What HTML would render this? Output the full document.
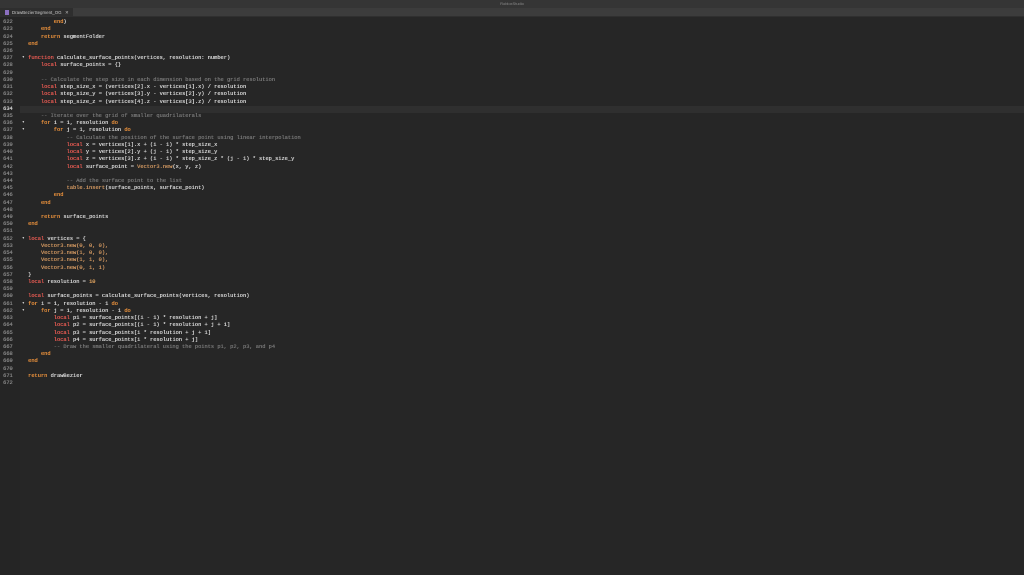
<!DOCTYPE html>
<html><head><meta charset="utf-8"><style>
html,body{margin:0;padding:0;width:1024px;height:575px;overflow:hidden;background:#262626;font-family:"Liberation Mono",monospace}
#title{position:absolute;left:0;top:0;width:1024px;height:8px;background:#353535;color:#8a8a8a;font:4px "Liberation Sans",sans-serif;text-align:center;line-height:8px}
#tabs{position:absolute;left:0;top:8px;width:1024px;height:8px;background:#3c3c3c;border-bottom:1px solid #2f2f2f}
#tab{position:absolute;left:0;top:8px;width:73px;height:9px;background:#2e2e2e;color:#c8c8c8;font:4.4px "Liberation Sans",sans-serif;line-height:9px}
#tab i{position:absolute;left:5px;top:2px;width:4px;height:5px;background:#8b6fc0}
#tab span{position:absolute;left:12px}
#tab b{position:absolute;left:65px;font-weight:normal;color:#bbb}
#gutter{position:absolute;left:0;top:17px;width:20px;height:558px;background:#252525}
#cur{position:absolute;left:20px;top:105.5px;width:1004px;height:7.2px;background:#2f2f2f}
.l{position:absolute;left:0;height:7.22px;line-height:7.22px;font-size:5.35px;white-space:pre;color:#d4d4d4;text-shadow:0.25px 0 0 currentColor}
.n{position:absolute;left:3px;width:14px;color:#8a8a8a}
.f{position:absolute;left:22px;color:#ddd;font-size:4px}
.k{color:#e8903c}.r{color:#e45a52}.m{color:#767676}.v{color:#cf9660}.d{color:#e8a860}
</style></head><body>
<div id="title">RobloxStudio</div>
<div id="tabs"></div>
<div id="tab"><i></i><span>DrawBezierSegment_OG</span><b>✕</b></div>
<div id="gutter"></div>
<div id="cur"></div>
<div id="code"></div>
<script>
var L=[
"        <k>end</k>)",
"    <k>end</k>",
"    <k>return</k> segmentFolder",
"<k>end</k>",
"",
"<r>function</r> calculate_surface_points(vertices, resolution: number)",
"    <r>local</r> surface_points = {}",
"",
"    <m>-- Calculate the step size in each dimension based on the grid resolution</m>",
"    <r>local</r> step_size_x = (vertices[2].x - vertices[1].x) / resolution",
"    <r>local</r> step_size_y = (vertices[3].y - vertices[2].y) / resolution",
"    <r>local</r> step_size_z = (vertices[4].z - vertices[3].z) / resolution",
"",
"    <m>-- Iterate over the grid of smaller quadrilaterals</m>",
"    <k>for</k> i = 1, resolution <k>do</k>",
"        <k>for</k> j = 1, resolution <k>do</k>",
"            <m>-- Calculate the position of the surface point using linear interpolation</m>",
"            <r>local</r> x = vertices[1].x + (i - 1) * step_size_x",
"            <r>local</r> y = vertices[2].y + (j - 1) * step_size_y",
"            <r>local</r> z = vertices[3].z + (i - 1) * step_size_z * (j - 1) * step_size_y",
"            <r>local</r> surface_point = <v>Vector3.new</v>(x, y, z)",
"",
"            <m>-- Add the surface point to the list</m>",
"            <v>table.insert</v>(surface_points, surface_point)",
"        <k>end</k>",
"    <k>end</k>",
"",
"    <k>return</k> surface_points",
"<k>end</k>",
"",
"<r>local</r> vertices = {",
"    <v>Vector3.new(0, 0, 0),</v>",
"    <v>Vector3.new(1, 0, 0),</v>",
"    <v>Vector3.new(1, 1, 0),</v>",
"    <v>Vector3.new(0, 1, 1)</v>",
"}",
"<r>local</r> resolution = <d>10</d>",
"",
"<r>local</r> surface_points = calculate_surface_points(vertices, resolution)",
"<k>for</k> i = 1, resolution - 1 <k>do</k>",
"    <k>for</k> j = 1, resolution - 1 <k>do</k>",
"        <r>local</r> p1 = surface_points[(i - 1) * resolution + j]",
"        <r>local</r> p2 = surface_points[(i - 1) * resolution + j + 1]",
"        <r>local</r> p3 = surface_points[i * resolution + j + 1]",
"        <r>local</r> p4 = surface_points[i * resolution + j]",
"        <m>-- Draw the smaller quadrilateral using the points p1, p2, p3, and p4</m>",
"    <k>end</k>",
"<k>end</k>",
"",
"<k>return</k> drawBezier",
""];
var folds={627:1,636:1,637:1,652:1,661:1,662:1};
var h="";
for(var i=0;i<L.length;i++){var n=622+i,t=19.1+i*7.22;
var s=L[i].replace(/<(k|r|m|v|d)>/g,'<span class="$1">').replace(/<\/(k|r|m|v|d)>/g,'</span>');
h+='<div class="l" style="top:'+t+'px;width:1024px"><span class="n"'+(n==634?' style="color:#ddd"':'')+'>'+n+'</span>'+(folds[n]?'<span class="f">▾</span>':'')+'<span style="position:absolute;left:28px">'+s+'</span></div>';}
document.getElementById('code').innerHTML=h;
</script>
</body></html>
